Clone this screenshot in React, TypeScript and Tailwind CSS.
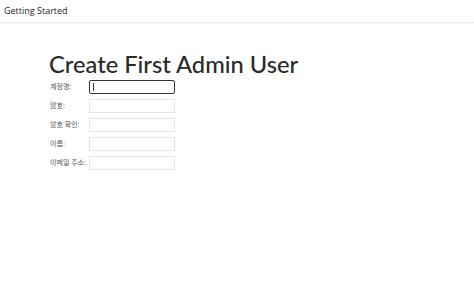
import React from 'react';

const fields = ['계정명:', '암호:', '암호 확인:', '이름:', '이메일 주소:'];

export default function App() {
  return (
    <div className="w-[474px] h-[294px] bg-white text-[#222]" style={{ fontFamily: '"Open Sans", "Noto Sans CJK KR", sans-serif' }}>
      {/* Header */}
      <div className="h-[23px] flex items-center px-[4px] border-b border-[#eeeeee] shadow-[0_1px_2px_rgba(0,0,0,0.03)]">
        <span className="text-[9px] text-[#222]">Getting Started</span>
      </div>

      {/* Content */}
      <div className="pl-[49px] pt-[27px]">
        <h1 className="text-[23.7px] leading-[28px] font-medium text-[#2a2a2a] font-['Lato',sans-serif]">Create First Admin User</h1>
        <div className="mt-[2px] grid grid-cols-[40px_86px] gap-y-[5px] items-center">
          {fields.map((label, i) => (
            <React.Fragment key={label}>
              <label className="text-[7px] text-[#555] pl-[1px] whitespace-nowrap">{label}</label>
              {i === 0 ? (
                <div className="h-[14px] border border-[#333] rounded-[2px] flex items-center pl-[3px]">
                  <div className="w-px h-[8px] bg-[#333]" />
                </div>
              ) : (
                <div className="h-[14px] border border-[#e6e6e6]" />
              )}
            </React.Fragment>
          ))}
        </div>
      </div>
    </div>
  );
}
